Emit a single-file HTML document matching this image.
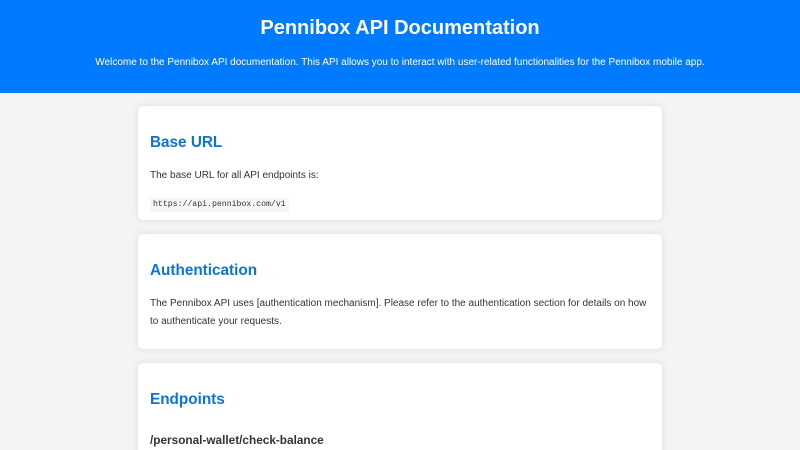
<!DOCTYPE html>
<html><head><style>
*{box-sizing:border-box}
html,body{height:450px;overflow:hidden}
body{margin:0;background:#f4f4f4;font-family:"Liberation Sans",sans-serif;color:#333;width:800px}
header{background:#007bff;color:#fff;text-align:center;height:93px;padding-top:16px}
header h1{margin:0;font-size:20px;line-height:24px}
header p{margin:0;margin-top:16px;font-size:10px;line-height:14px}
.c{width:524px;margin:13px auto 0}
.card{background:#fff;border-radius:5px;box-shadow:0 0 8px rgba(0,0,0,.1);padding:12px;margin-bottom:14px}
h2{color:#0a74da;font-size:15.3px;line-height:20px;margin:15px 0 14px}
p{font-size:10px;line-height:18px;margin:0 0 8px}
code{display:inline-block;font-family:"Liberation Mono",monospace;font-size:8.2px;background:#f6f6f6;padding:1px 3px;line-height:12px;margin:4px 0 8px}
h3{font-size:11.8px;margin:14px 0 0;line-height:16px}
</style></head><body>
<header><h1>Pennibox API Documentation</h1><p>Welcome to the Pennibox API documentation. This API allows you to interact with user-related functionalities for the Pennibox mobile app.</p></header>
<div class="c">
<div class="card" style="height:114px"><h2>Base URL</h2><p>The base URL for all API endpoints is:</p><code>https://api.pennibox.com/v1</code></div>
<div class="card" style="height:115px"><h2>Authentication</h2><p>The Pennibox API uses [authentication mechanism]. Please refer to the authentication section for details on how to authenticate your requests.</p></div>
<div class="card" style="height:100px"><h2>Endpoints</h2><h3 style="margin-top:22px">/personal-wallet/check-balance</h3></div>
</div>
</body></html>
